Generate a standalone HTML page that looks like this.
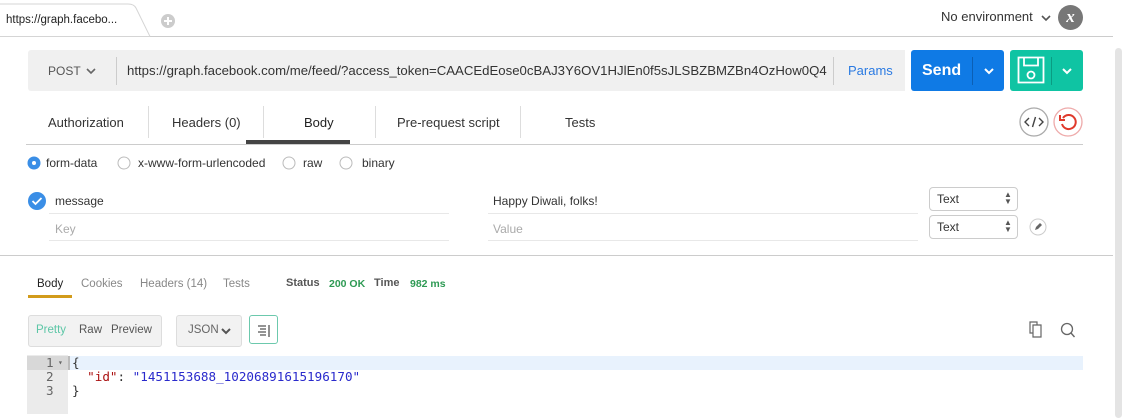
<!DOCTYPE html>
<html><head><style>
*{margin:0;padding:0;box-sizing:border-box}
body{width:1123px;height:414px;background:#fff;font-family:"Liberation Sans",sans-serif;position:relative;overflow:hidden;color:#333}
.a{position:absolute;white-space:nowrap}
.t{font-size:12px}
</style></head><body>
<svg class="a" style="left:0;top:0" width="1123" height="40">
<path d="M0 36.5 H150 L136 8 Q134 4 128 4 H0" fill="#fff" stroke="#d5d5d5"/>
<line x1="150" y1="36.5" x2="1113" y2="36.5" stroke="#ccc"/>
<circle cx="168" cy="21" r="7" fill="#ccc"/>
<path d="M164 21h8M168 17v8" stroke="#fff" stroke-width="2"/>
</svg>
<div class="a t" style="left:6px;top:14px;font-size:11.5px;color:#222">https://graph.facebo...</div>
<div class="a" style="left:941px;top:9px;font-size:13px;color:#333">No environment</div>
<svg class="a" style="left:1040px;top:13px" width="12" height="10"><path d="M2 3l4 4 4-4" fill="none" stroke="#555" stroke-width="1.6"/></svg>
<div class="a" style="left:1058px;top:5px;width:25px;height:25px;border-radius:50%;background:#777;color:#fff;font:bold italic 17px 'Liberation Serif',serif;text-align:center;line-height:24px">x</div>
<div class="a" style="left:28px;top:50px;width:877px;height:41px;background:#f0f0f0;border-radius:3px"></div>
<div class="a" style="left:48px;top:64px;font-size:12px;color:#555">POST</div>
<svg class="a" style="left:85px;top:66px" width="12" height="10"><path d="M2 3l4 4 4-4" fill="none" stroke="#666" stroke-width="1.6"/></svg>
<div class="a" style="left:116px;top:57px;width:1px;height:28px;background:#ccc"></div>
<div class="a" style="left:127px;top:63px;font-size:13.2px;color:#333">https://graph.facebook.com/me/feed/?access_token=CAACEdEose0cBAJ3Y6OV1HJlEn0f5sJLSBZBMZBn4OzHow0Q4</div>
<div class="a" style="left:833px;top:50px;width:72px;height:41px;background:#f0f0f0"></div>
<div class="a" style="left:833px;top:57px;width:1px;height:28px;background:#ccc"></div>
<div class="a" style="left:848px;top:63px;font-size:13px;color:#2a7ae2">Params</div>
<div class="a" style="left:911px;top:50px;width:93px;height:41px;background:#0f7ae5;border-radius:3px"></div>
<div class="a" style="left:922px;top:62px;font-size:16px;font-weight:bold;color:#fff">Send</div>
<div class="a" style="left:972px;top:57px;width:1px;height:28px;background:#0b5fb5"></div>
<svg class="a" style="left:982px;top:66px" width="14" height="10"><path d="M3 3l4 4 4-4" fill="none" stroke="#fff" stroke-width="2"/></svg>
<div class="a" style="left:1010px;top:50px;width:73px;height:41px;background:#0fc4a3;border-radius:3px"></div>
<svg class="a" style="left:1017px;top:56px" width="28" height="28"><path d="M1.5 1.5h25v25h-25z" fill="none" stroke="#fff" stroke-width="1.8"/><path d="M7 1.5v8h14v-8" fill="none" stroke="#fff" stroke-width="1.8"/><circle cx="14" cy="19" r="3.5" fill="none" stroke="#fff" stroke-width="1.8"/></svg>
<div class="a" style="left:1051px;top:57px;width:1px;height:28px;background:#0a9c82"></div>
<svg class="a" style="left:1060px;top:66px" width="14" height="10"><path d="M3 3l4 4 4-4" fill="none" stroke="#fff" stroke-width="2"/></svg>
<div class="a" style="left:1115px;top:48px;width:7px;height:370px;background:#e4e4e4;border-radius:4px"></div>
<div class="a" style="left:48px;top:115px;font-size:13px">Authorization</div>
<div class="a" style="left:148px;top:106px;width:1px;height:32px;background:#ddd"></div>
<div class="a" style="left:172px;top:115px;font-size:13px">Headers (0)</div>
<div class="a" style="left:263px;top:106px;width:1px;height:32px;background:#ddd"></div>
<div class="a" style="left:304px;top:115px;font-size:13px;color:#222">Body</div>
<div class="a" style="left:375px;top:106px;width:1px;height:32px;background:#ddd"></div>
<div class="a" style="left:397px;top:115px;font-size:13px">Pre-request script</div>
<div class="a" style="left:520px;top:106px;width:1px;height:32px;background:#ddd"></div>
<div class="a" style="left:565px;top:115px;font-size:13px">Tests</div>
<div class="a" style="left:26px;top:144px;width:1057px;height:1px;background:#ccc"></div>
<div class="a" style="left:246px;top:140px;width:104px;height:4px;background:#444"></div>
<svg class="a" style="left:1017px;top:106px" width="70" height="32">
<circle cx="17" cy="16" r="14" fill="#fff" stroke="#aaa" stroke-width="1.3"/>
<path d="M12 12l-4 4 4 4M22 12l4 4-4 4M18.5 11l-3 10" fill="none" stroke="#444" stroke-width="1.4"/>
<circle cx="51" cy="16" r="14" fill="#fff" stroke="#eeaaaa" stroke-width="1.3"/>
<path d="M46 12a7 7 0 1 1 -1 6" fill="none" stroke="#e0392b" stroke-width="2"/><path d="M43 9v5h5" fill="none" stroke="#e0392b" stroke-width="2"/>
</svg>
<svg class="a" style="left:26px;top:155px" width="340" height="16">
<circle cx="8" cy="8" r="6.5" fill="#3a8ee6"/><circle cx="8" cy="8" r="2" fill="#fff"/>
<circle cx="98" cy="8" r="6" fill="#fff" stroke="#bbb"/>
<circle cx="263" cy="8" r="6" fill="#fff" stroke="#bbb"/>
<circle cx="320" cy="8" r="6" fill="#fff" stroke="#bbb"/>
</svg>
<div class="a t" style="left:46px;top:156px">form-data</div>
<div class="a t" style="left:138px;top:156px">x-www-form-urlencoded</div>
<div class="a t" style="left:303px;top:156px">raw</div>
<div class="a t" style="left:362px;top:156px">binary</div>
<svg class="a" style="left:27px;top:191px" width="20" height="20"><circle cx="10" cy="10" r="9" fill="#3a8ee6"/><path d="M5.5 10l3 3 6-6" fill="none" stroke="#fff" stroke-width="1.8"/></svg>
<div class="a t" style="left:55px;top:194px;color:#333">message</div>
<div class="a" style="left:49px;top:213px;width:400px;height:1px;background:#e8e8e8"></div>
<div class="a t" style="left:55px;top:222px;color:#aaa">Key</div>
<div class="a" style="left:49px;top:240px;width:400px;height:1px;background:#e8e8e8"></div>
<div class="a t" style="left:493px;top:194px;color:#333">Happy Diwali, folks!</div>
<div class="a" style="left:488px;top:213px;width:430px;height:1px;background:#e8e8e8"></div>
<div class="a t" style="left:493px;top:222px;color:#aaa">Value</div>
<div class="a" style="left:488px;top:240px;width:430px;height:1px;background:#e8e8e8"></div>
<div class="a" style="left:929px;top:187px;width:89px;height:24px;border:1px solid #ccc;border-radius:4px"></div>
<div class="a t" style="left:937px;top:192px">Text</div>
<div class="a" style="left:1004px;top:191px;font-size:8px;line-height:7px;color:#555">▲<br>▼</div>
<div class="a" style="left:929px;top:215px;width:89px;height:24px;border:1px solid #ccc;border-radius:4px"></div>
<div class="a t" style="left:937px;top:220px">Text</div>
<div class="a" style="left:1004px;top:219px;font-size:8px;line-height:7px;color:#555">▲<br>▼</div>
<svg class="a" style="left:1029px;top:218px" width="18" height="18"><circle cx="9" cy="9" r="8" fill="#fff" stroke="#ccc"/><path d="M6 12l1-3 4-4 2 2-4 4z" fill="#666"/></svg>
<div class="a" style="left:0;top:255px;width:1113px;height:1px;background:#ccc"></div>
<div class="a" style="left:37px;top:278px;font-size:11.5px;color:#222">Body</div>
<div class="a" style="left:28px;top:295px;width:44px;height:3px;background:#d29b1b"></div>
<div class="a" style="left:81px;top:278px;font-size:11.5px;color:#888">Cookies</div>
<div class="a" style="left:140px;top:278px;font-size:11.5px;color:#888">Headers (14)</div>
<div class="a" style="left:223px;top:278px;font-size:11.5px;color:#888">Tests</div>
<div class="a" style="left:286px;top:277px;font-size:11px;font-weight:bold;color:#555">Status</div>
<div class="a" style="left:329px;top:278px;font-size:10.5px;font-weight:bold;color:#2e9a54">200 OK</div>
<div class="a" style="left:374px;top:277px;font-size:11px;font-weight:bold;color:#555">Time</div>
<div class="a" style="left:410px;top:278px;font-size:10.5px;font-weight:bold;color:#2e9a54">982 ms</div>
<div class="a" style="left:28px;top:315px;width:134px;height:32px;background:#f2f2f2;border:1px solid #ddd;border-radius:3px"></div>
<div class="a" style="left:36px;top:324px;font-size:11.5px;color:#5cc6a6">Pretty</div>
<div class="a" style="left:79px;top:324px;font-size:11.5px;color:#555">Raw</div>
<div class="a" style="left:111px;top:324px;font-size:11.5px;color:#555">Preview</div>
<div class="a" style="left:176px;top:315px;width:66px;height:32px;background:#f2f2f2;border:1px solid #ddd;border-radius:3px"></div>
<div class="a" style="left:188px;top:324px;font-size:11.5px;color:#666">JSON</div>
<svg class="a" style="left:220px;top:327px" width="12" height="9"><path d="M2 2l4 4 4-4" fill="none" stroke="#555" stroke-width="2"/></svg>
<div class="a" style="left:249px;top:315px;width:29px;height:29px;border:1px solid #6cc9ad;border-radius:3px"></div>
<svg class="a" style="left:256px;top:322px" width="16" height="16"><path d="M2 4h8M4 7h6M2 10h8M4 13h6" stroke="#555" stroke-width="1.2"/><path d="M13 3v12" stroke="#555" stroke-width="1.3"/></svg>
<svg class="a" style="left:1027px;top:320px" width="50" height="20">
<path d="M3 2h7v11H3z" fill="none" stroke="#666" stroke-width="1.2"/><path d="M6 5h8v12H6z" fill="#fff" stroke="#666" stroke-width="1.2"/>
<circle cx="40" cy="9" r="5.5" fill="none" stroke="#666" stroke-width="1.3"/><path d="M44 13l3.5 4" stroke="#666" stroke-width="1.4"/>
</svg>
<div class="a" style="left:27px;top:355px;width:41px;height:59px;background:#ebebeb"></div>
<div class="a" style="left:27px;top:356px;width:41px;height:14px;background:#d8d8d8"></div>
<div class="a" style="left:68px;top:356px;width:1015px;height:14px;background:#e8f2fd"></div>
<div class="a" style="left:68px;top:356px;width:2px;height:14px;background:#bbb"></div>
<div class="a" style="left:0;top:356px;font:12.6px/14px 'DejaVu Sans Mono','Liberation Mono',monospace">
<div style="position:absolute;left:46px;top:0;color:#666">1</div>
<div style="position:absolute;left:58px;top:0;color:#666;font-size:8px">▾</div>
<div style="position:absolute;left:46px;top:14px;color:#666">2</div>
<div style="position:absolute;left:46px;top:28px;color:#666">3</div>
<div style="position:absolute;left:72px;top:0">{</div>
<div style="position:absolute;left:72px;top:14px;white-space:pre"><span style="color:#a11">  "id"</span>: <span style="color:#2a2acc">"1451153688_10206891615196170"</span></div>
<div style="position:absolute;left:72px;top:28px">}</div>
</div>
</body></html>
